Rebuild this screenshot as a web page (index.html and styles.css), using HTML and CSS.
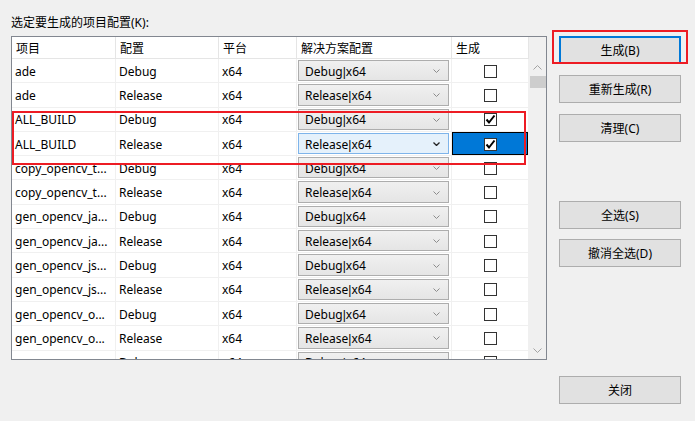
FILE: index.html
```html
<!DOCTYPE html>
<html>
<head>
    <meta charset="utf-8">
    <link rel="stylesheet" href="styles.css">
</head>
<body>
    <div class="dialog">
        <div class="left-pane">
            <div class="caption">选定要生成的项目配置(K):</div>
            <div class="list">
                <div class="grid">
                    <div class="row head">
                        <div class="cell">项目</div>
                        <div class="cell">配置</div>
                        <div class="cell">平台</div>
                        <div class="cell">解决方案配置</div>
                        <div class="cell">生成</div>
                    </div>

                    <div class="row">
                        <div class="cell">ade</div>
                        <div class="cell">Debug</div>
                        <div class="cell">x64</div>
                        <div class="cell combo-cell"><div class="combo"><span>Debug<span class="bar">|</span>x64</span><svg class="arrow" width="7" height="4" viewBox="0 0 7 4"><polyline points="0.5,0.5 3.5,3.5 6.5,0.5"/></svg></div></div>
                        <div class="cell check-cell"><span class="check"></span></div>
                    </div>
                    <div class="row">
                        <div class="cell">ade</div>
                        <div class="cell">Release</div>
                        <div class="cell">x64</div>
                        <div class="cell combo-cell"><div class="combo"><span>Release<span class="bar">|</span>x64</span><svg class="arrow" width="7" height="4" viewBox="0 0 7 4"><polyline points="0.5,0.5 3.5,3.5 6.5,0.5"/></svg></div></div>
                        <div class="cell check-cell"><span class="check"></span></div>
                    </div>
                    <div class="row">
                        <div class="cell">ALL_BUILD</div>
                        <div class="cell">Debug</div>
                        <div class="cell">x64</div>
                        <div class="cell combo-cell"><div class="combo"><span>Debug<span class="bar">|</span>x64</span><svg class="arrow" width="7" height="4" viewBox="0 0 7 4"><polyline points="0.5,0.5 3.5,3.5 6.5,0.5"/></svg></div></div>
                        <div class="cell check-cell"><span class="check on"><svg width="11" height="11" viewBox="0 0 11 11"><polyline points="1.5,5.5 4,8.5 9.5,1.5"/></svg></span></div>
                    </div>
                    <div class="row">
                        <div class="cell">ALL_BUILD</div>
                        <div class="cell">Release</div>
                        <div class="cell">x64</div>
                        <div class="cell combo-cell"><div class="combo hot"><span>Release<span class="bar">|</span>x64</span><svg class="arrow" width="7" height="4" viewBox="0 0 7 4"><polyline points="0.5,0.5 3.5,3.5 6.5,0.5"/></svg></div></div>
                        <div class="cell check-cell selected"><span class="check on"><svg width="11" height="11" viewBox="0 0 11 11"><polyline points="1.5,5.5 4,8.5 9.5,1.5"/></svg></span></div>
                    </div>
                    <div class="row">
                        <div class="cell">copy_opencv_t...</div>
                        <div class="cell">Debug</div>
                        <div class="cell">x64</div>
                        <div class="cell combo-cell"><div class="combo"><span>Debug<span class="bar">|</span>x64</span><svg class="arrow" width="7" height="4" viewBox="0 0 7 4"><polyline points="0.5,0.5 3.5,3.5 6.5,0.5"/></svg></div></div>
                        <div class="cell check-cell"><span class="check"></span></div>
                    </div>
                    <div class="row">
                        <div class="cell">copy_opencv_t...</div>
                        <div class="cell">Release</div>
                        <div class="cell">x64</div>
                        <div class="cell combo-cell"><div class="combo"><span>Release<span class="bar">|</span>x64</span><svg class="arrow" width="7" height="4" viewBox="0 0 7 4"><polyline points="0.5,0.5 3.5,3.5 6.5,0.5"/></svg></div></div>
                        <div class="cell check-cell"><span class="check"></span></div>
                    </div>
                    <div class="row">
                        <div class="cell">gen_opencv_ja...</div>
                        <div class="cell">Debug</div>
                        <div class="cell">x64</div>
                        <div class="cell combo-cell"><div class="combo"><span>Debug<span class="bar">|</span>x64</span><svg class="arrow" width="7" height="4" viewBox="0 0 7 4"><polyline points="0.5,0.5 3.5,3.5 6.5,0.5"/></svg></div></div>
                        <div class="cell check-cell"><span class="check"></span></div>
                    </div>
                    <div class="row">
                        <div class="cell">gen_opencv_ja...</div>
                        <div class="cell">Release</div>
                        <div class="cell">x64</div>
                        <div class="cell combo-cell"><div class="combo"><span>Release<span class="bar">|</span>x64</span><svg class="arrow" width="7" height="4" viewBox="0 0 7 4"><polyline points="0.5,0.5 3.5,3.5 6.5,0.5"/></svg></div></div>
                        <div class="cell check-cell"><span class="check"></span></div>
                    </div>
                    <div class="row">
                        <div class="cell">gen_opencv_js...</div>
                        <div class="cell">Debug</div>
                        <div class="cell">x64</div>
                        <div class="cell combo-cell"><div class="combo"><span>Debug<span class="bar">|</span>x64</span><svg class="arrow" width="7" height="4" viewBox="0 0 7 4"><polyline points="0.5,0.5 3.5,3.5 6.5,0.5"/></svg></div></div>
                        <div class="cell check-cell"><span class="check"></span></div>
                    </div>
                    <div class="row">
                        <div class="cell">gen_opencv_js...</div>
                        <div class="cell">Release</div>
                        <div class="cell">x64</div>
                        <div class="cell combo-cell"><div class="combo"><span>Release<span class="bar">|</span>x64</span><svg class="arrow" width="7" height="4" viewBox="0 0 7 4"><polyline points="0.5,0.5 3.5,3.5 6.5,0.5"/></svg></div></div>
                        <div class="cell check-cell"><span class="check"></span></div>
                    </div>
                    <div class="row">
                        <div class="cell">gen_opencv_o...</div>
                        <div class="cell">Debug</div>
                        <div class="cell">x64</div>
                        <div class="cell combo-cell"><div class="combo"><span>Debug<span class="bar">|</span>x64</span><svg class="arrow" width="7" height="4" viewBox="0 0 7 4"><polyline points="0.5,0.5 3.5,3.5 6.5,0.5"/></svg></div></div>
                        <div class="cell check-cell"><span class="check"></span></div>
                    </div>
                    <div class="row">
                        <div class="cell">gen_opencv_o...</div>
                        <div class="cell">Release</div>
                        <div class="cell">x64</div>
                        <div class="cell combo-cell"><div class="combo"><span>Release<span class="bar">|</span>x64</span><svg class="arrow" width="7" height="4" viewBox="0 0 7 4"><polyline points="0.5,0.5 3.5,3.5 6.5,0.5"/></svg></div></div>
                        <div class="cell check-cell"><span class="check"></span></div>
                    </div>
                    <div class="row">
                        <div class="cell">gen_opencv_p...</div>
                        <div class="cell">Debug</div>
                        <div class="cell">x64</div>
                        <div class="cell combo-cell"><div class="combo"><span>Debug<span class="bar">|</span>x64</span><svg class="arrow" width="7" height="4" viewBox="0 0 7 4"><polyline points="0.5,0.5 3.5,3.5 6.5,0.5"/></svg></div></div>
                        <div class="cell check-cell"><span class="check"></span></div>
                    </div>
                </div>

                <div class="vscroll">
                    <div class="vscroll-head"></div>
                    <div class="vscroll-btn"><svg width="9" height="5" viewBox="0 0 9 5"><polyline points="0.5,4.5 4.5,0.5 8.5,4.5"/></svg></div>
                    <div class="vscroll-thumb"></div>
                    <div class="vscroll-track"></div>
                    <div class="vscroll-btn"><svg width="9" height="5" viewBox="0 0 9 5"><polyline points="0.5,0.5 4.5,4.5 8.5,0.5"/></svg></div>
                </div>

                <!-- annotation frame around the ALL_BUILD rows -->
                <div class="mark mark-rows"></div>
            </div>
        </div>

        <div class="right-pane">
            <div class="btn-wrap">
                <button class="btn default">生成(B)</button>
                <div class="mark mark-btn"></div>
            </div>
            <button class="btn">重新生成(R)</button>
            <button class="btn">清理(C)</button>
            <button class="btn gap-top">全选(S)</button>
            <button class="btn">撤消全选(D)</button>
            <button class="btn close">关闭</button>
        </div>
    </div>
</body>
</html>
```

FILE: styles.css
```css
body {
    margin: 0;
    width: 695px;
    height: 421px;
    background-color: #f0f0f0;
    font-family: "Noto Sans", "Noto Sans CJK SC", sans-serif;
    font-size: 12px;
    color: #000;
    overflow: hidden;
}

.dialog {
    display: flex;
    padding: 14px 0 0 11px;
}

.left-pane {
    width: 536px;
}

.caption {
    height: 16px;
    line-height: 18px;
    white-space: nowrap;
}

/* list view */
.list {
    position: relative;
    margin-top: 6px;
    height: 324px;
    box-sizing: border-box;
    border: 1px solid #828790;
    background-color: #fff;
    display: flex;
}

.grid {
    width: 517px;
    overflow: hidden;
}

.row {
    display: grid;
    grid-template-columns: 104px 103px 78px 155px 77px;
    height: 24.3px;
}

.cell {
    box-sizing: border-box;
    border-right: 1px solid #f0f0f0;
    border-bottom: 1px solid #f0f0f0;
    padding-left: 3px;
    padding-top: 1px;
    display: flex;
    align-items: center;
    white-space: nowrap;
    overflow: hidden;
}

.row.head {
    height: 22px;
}

.row.head .cell {
    border-right-color: #e5e5e5;
    border-bottom-color: #e5e5e5;
    padding-left: 4px;
    padding-top: 0;
}

.combo-cell {
    padding: 1px 2px 1px 1px;
    align-items: stretch;
}

.combo {
    flex: 1;
    display: flex;
    align-items: center;
    justify-content: space-between;
    padding: 1px 8px 0 6px;
    border: 1px solid #adadad;
    background: linear-gradient(#f0f0f0, #e5e5e5);
}

/* Noto's bar glyph is too wide, Arial metrics are closer */
.bar {
    font-family: "Liberation Sans", sans-serif;
}

.combo .arrow polyline {
    fill: none;
    stroke: #8c8c8c;
    stroke-width: 1;
}

.combo.hot {
    background: #e5f1fb;
    border-color: #7eb4ea;
}

.combo.hot .arrow polyline {
    stroke: #222;
    stroke-width: 1.3;
}

.check-cell {
    justify-content: center;
    padding-left: 0;
}

.check {
    width: 13px;
    height: 13px;
    box-sizing: border-box;
    border: 1px solid #333;
    background-color: #fff;
    display: flex;
    align-items: center;
    justify-content: center;
}

.check svg polyline {
    fill: none;
    stroke: #000;
    stroke-width: 2;
}

.check-cell.selected {
    background-color: #0078d7;
    box-shadow: inset 0 0 0 1px #000;
}

/* scroll bar */
.vscroll {
    width: 17px;
    background-color: #f0f0f0;
    display: flex;
    flex-direction: column;
}

.vscroll-head {
    height: 22px;
}

.vscroll-btn {
    height: 17px;
    display: flex;
    align-items: center;
    justify-content: center;
}

.vscroll-btn polyline {
    fill: none;
    stroke: #a3a3a3;
    stroke-width: 1;
}

.vscroll-thumb {
    height: 12px;
    margin-left: 1px;
    background-color: #cdcdcd;
}

.vscroll-track {
    flex: 1;
}

/* buttons */
.right-pane {
    margin-left: 12px;
    width: 122px;
    padding-top: 22px;
    display: flex;
    flex-direction: column;
}

.btn-wrap {
    position: relative;
}

.btn {
    display: block;
    width: 122px;
    height: 28px;
    margin: 0 0 11px 0;
    box-sizing: border-box;
    border: 1px solid #adadad;
    background-color: #e1e1e1;
    font-family: "Noto Sans", "Noto Sans CJK SC", sans-serif;
    font-size: 12px;
    color: #000;
    padding: 0;
}

.btn.default {
    border: 2px solid #0078d7;
}

.btn.gap-top {
    margin-top: 48px;
    margin-bottom: 10px;
}

.btn.close {
    margin-top: 98px;
}

/* red annotation frames */
.mark {
    position: absolute;
    box-sizing: border-box;
    border: 2px solid #ed1c24;
}

.mark-rows {
    left: 0;
    top: 74px;
    width: 514px;
    height: 54px;
}

.mark-btn {
    left: -7px;
    top: -6px;
    width: 136px;
    height: 34px;
}
```
